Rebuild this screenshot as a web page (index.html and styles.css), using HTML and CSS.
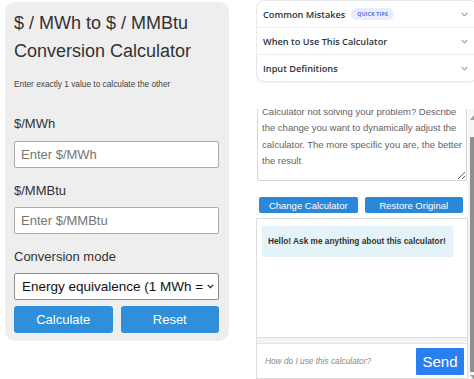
FILE: index.html
```html
<!DOCTYPE html>
<html lang="en">
<head>
<meta charset="utf-8">
<title>$ / MWh to $ / MMBtu Conversion Calculator</title>
<link rel="stylesheet" href="styles.css">
</head>
<body>
<div class="page">
  <div class="calc">
    <h1 class="title">$ / MWh to $ / MMBtu Conversion Calculator</h1>
    <p class="hint">Enter exactly 1 value to calculate the other</p>
    <label class="lbl lbl-first" for="mwh">$/MWh</label>
    <input class="fld" id="mwh" type="text" placeholder="Enter $/MWh">
    <label class="lbl" for="mmbtu">$/MMBtu</label>
    <input class="fld" id="mmbtu" type="text" placeholder="Enter $/MMBtu">
    <label class="lbl" for="mode">Conversion mode</label>
    <div class="sel-wrap">
      <select class="fld sel" id="mode">
        <option>Energy equivalence (1 MWh = 3.412 MMBtu)</option>
      </select>
      <svg class="sel-chev" width="7" height="5" viewBox="0 0 7 5"><polyline points="0.7,0.9 3.5,3.7 6.3,0.9" fill="none" stroke="#222" stroke-width="1.3"/></svg>
    </div>
    <div class="btns">
      <button class="btn">Calculate</button>
      <button class="btn">Reset</button>
    </div>
  </div>

  <div class="side">
    <div class="acc">
      <div class="acc-row">
        <span class="acc-title">Common Mistakes</span>
        <span class="badge">QUICK TIPS</span>
        <svg class="chev" width="7" height="5" viewBox="0 0 7 5"><polyline points="0.8,1 3.5,3.8 6.2,1" fill="none" stroke="#9aa0a8" stroke-width="1.1"/></svg>
      </div>
      <div class="acc-row">
        <span class="acc-title">When to Use This Calculator</span>
        <svg class="chev" width="7" height="5" viewBox="0 0 7 5"><polyline points="0.8,1 3.5,3.8 6.2,1" fill="none" stroke="#9aa0a8" stroke-width="1.1"/></svg>
      </div>
      <div class="acc-row">
        <span class="acc-title">Input Definitions</span>
        <svg class="chev" width="7" height="5" viewBox="0 0 7 5"><polyline points="0.8,1 3.5,3.8 6.2,1" fill="none" stroke="#9aa0a8" stroke-width="1.1"/></svg>
      </div>
    </div>

    <div class="scroller">
      <div class="scroll-content">
        <textarea class="ask" placeholder="Calculator not solving your problem? Describe the change you want to dynamically adjust the calculator. The more specific you are, the better the result"></textarea>
        <div class="mod-btns">
          <button class="mbtn">Change Calculator</button>
          <button class="mbtn">Restore Original</button>
        </div>
        <div class="chat">
          <div class="msgs">
            <div class="bubble">Hello! Ask me anything about this calculator!</div>
          </div>
          <div class="chat-input">
            <input class="chat-field" type="text" placeholder="How do I use this calculator?">
            <button class="send">Send</button>
          </div>
        </div>
      </div>
      <div class="sbar">
        <div class="sb-btn"><span class="tri-up"></span></div>
        <div class="sb-track"></div>
        <div class="sb-thumb"></div>
        <div class="sb-btn"><span class="tri-down"></span></div>
      </div>
    </div>
  </div>
</div>
</body>
</html>
```

FILE: styles.css
```css
* { box-sizing: border-box; }

html, body {
  margin: 0;
  padding: 0;
  background: #ffffff;
}

body {
  width: 474px;
  height: 379px;
  overflow: hidden;
  font-family: "Liberation Sans", Arial, sans-serif;
}

.page {
  display: flex;
  align-items: flex-start;
  padding: 2px 0 0 5px;
  width: 520px;
}

/* ---------- left calculator ---------- */
.calc {
  width: 224px;
  flex: none;
  background: #eeeeee;
  border-radius: 10px;
  padding: 7px 10px 8px 9px;
  display: flex;
  flex-direction: column;
  color: #333333;
}

.title {
  margin: 0;
  font-size: 18px;
  line-height: 28px;
  font-weight: normal;
  color: #333333;
}

.hint {
  margin: 13px 0 0;
  font-size: 8.3px;
  line-height: 12px;
  color: #444444;
}

.lbl {
  display: block;
  font-size: 13px;
  line-height: 16px;
  color: #333333;
  margin: 15px 0 8px;
}

.lbl-first {
  margin-top: 26px;
  margin-bottom: 9px;
}

.fld {
  display: block;
  width: 205px;
  height: 27px;
  margin: 0;
  border: 1px solid #a9a9a9;
  border-radius: 2px;
  background: #ffffff;
  padding: 0 6px;
  font-family: "Liberation Sans", Arial, sans-serif;
  font-size: 13px;
  color: #222222;
}

.fld::placeholder {
  color: #757575;
}

.sel-wrap {
  position: relative;
  width: 205px;
}

.sel {
  -webkit-appearance: none;
  appearance: none;
  font-size: 13.5px;
  padding: 0 14px 0 7px;
  color: #111111;
  border-color: #8f8f8f;
  white-space: nowrap;
  overflow: hidden;
}

.sel-chev {
  position: absolute;
  right: 5px;
  top: 11px;
  pointer-events: none;
}

.btns {
  display: flex;
  gap: 8px;
  margin-top: 6px;
}

.btn {
  flex: 1;
  height: 27px;
  border: none;
  border-radius: 3px;
  background: #2f8fdb;
  color: #ffffff;
  font-family: "Liberation Sans", Arial, sans-serif;
  font-size: 13px;
  padding: 0;
}

/* ---------- right side ---------- */
.side {
  margin-left: 27px;
  width: 232px;
  flex: none;
  display: flex;
  flex-direction: column;
  margin-top: -2px;
}

.acc {
  width: 222px;
  border: 1px solid #e6e8ec;
  border-radius: 8px;
  background: #ffffff;
  box-shadow: 0 1px 2px rgba(0, 0, 0, 0.05);
}

.acc-row {
  height: 27px;
  display: flex;
  align-items: center;
  padding: 0 9px 0 6px;
  border-bottom: 1px solid #eceef1;
}

.acc-row:last-child {
  border-bottom: none;
  height: 26px;
}

.acc-title {
  font-family: "Open Sans", "Noto Sans", sans-serif;
  font-weight: 600;
  font-size: 9.2px;
  color: #2d3340;
}

.badge {
  margin-left: 6px;
  background: #e9edfb;
  color: #5a6fd8;
  font-family: "Open Sans", "Noto Sans", sans-serif;
  font-weight: 700;
  font-size: 5.2px;
  letter-spacing: 0.2px;
  padding: 3px 6px;
  border-radius: 7px;
  line-height: 6px;
}

.chev {
  margin-left: auto;
  flex: none;
}

.scroller {
  margin-top: 27px;
  height: 290px;
  overflow: hidden;
  display: flex;
}

.scroll-content {
  width: 212px;
  flex: none;
  margin-top: -14px;
  display: flex;
  flex-direction: column;
}

.ask {
  display: block;
  margin: 0 0 0 1px;
  width: 210px;
  height: 86px;
  border: 1px solid #d6d6d6;
  border-radius: 2px;
  padding: 8px 4px;
  font-family: "Liberation Sans", Arial, sans-serif;
  font-size: 9.5px;
  line-height: 16.3px;
  color: #444444;
  resize: vertical;
  overflow: hidden;
}

.ask::placeholder {
  color: #636363;
}

.mod-btns {
  display: flex;
  gap: 7px;
  margin: 16px 0 0 3px;
  width: 204px;
}

.mbtn {
  flex: 1;
  height: 16px;
  border: none;
  border-radius: 2px;
  background: #2b88d8;
  color: #ffffff;
  font-family: "Liberation Sans", Arial, sans-serif;
  font-size: 9.5px;
  padding: 0;
}

.chat {
  margin-top: 5px;
  width: 212px;
  border: 1px solid #dddddd;
  background: #f3f3f3;
  display: flex;
  flex-direction: column;
}

.msgs {
  height: 119px;
  background: #ffffff;
  border-bottom: 1px solid #dedede;
  padding: 7px 14px 0 5px;
}

.bubble {
  background: #e4f3f8;
  padding: 10px 6px 11px;
  font-size: 8.3px;
  line-height: 10px;
  font-weight: bold;
  color: #333333;
}

.chat-input {
  margin-top: 5px;
  border-top: 1px solid #e4e4e4;
  background: #ffffff;
  height: 35px;
  display: flex;
  align-items: center;
  padding: 0 3px 0 8px;
}

.chat-field {
  flex: 1;
  min-width: 0;
  border: none;
  outline: none;
  background: transparent;
  font-family: "Liberation Sans", Arial, sans-serif;
  font-size: 8.3px;
  font-style: italic;
  padding: 0;
  color: #333333;
}

.chat-field::placeholder {
  color: #8a8a8a;
}

.send {
  width: 48px;
  height: 27px;
  border: none;
  background: #2a7ff0;
  color: #ffffff;
  font-family: "Liberation Sans", Arial, sans-serif;
  font-size: 15px;
  padding: 0;
  border-radius: 1px;
}

/* fake classic scrollbar, partly cut by the window edge */
.sbar {
  width: 15px;
  flex: none;
  display: flex;
  flex-direction: column;
  background: #f6f6f6;
}

.sb-btn {
  height: 17px;
  display: flex;
  align-items: center;
  padding-left: 2px;
}

.tri-up {
  width: 0;
  height: 0;
  border-left: 4px solid transparent;
  border-right: 4px solid transparent;
  border-bottom: 5px solid #a0a0a0;
}

.tri-down {
  width: 0;
  height: 0;
  border-left: 4px solid transparent;
  border-right: 4px solid transparent;
  border-top: 5px solid #a0a0a0;
  margin-top: -6px;
}

.sb-track {
  height: 11px;
}

.sb-thumb {
  height: 235px;
  margin-left: 2px;
  width: 9px;
  background: #8e8e8e;
  border-radius: 1px;
}
```
